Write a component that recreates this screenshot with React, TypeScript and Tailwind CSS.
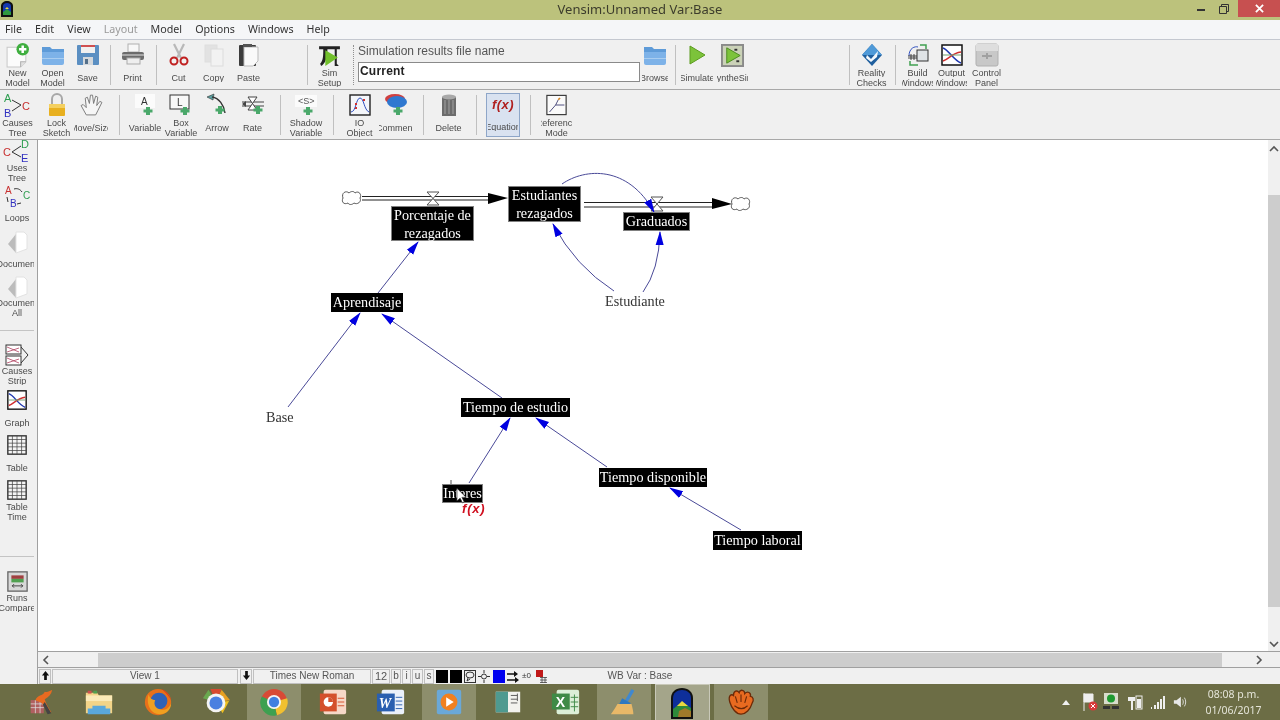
import type { ReactNode } from "react";

const Ico = ({ children, s = "w-6 h-6", v = "0 0 24 24" }: { children: ReactNode; s?: string; v?: string }) => (
  <svg viewBox={v} className={s}>{children}</svg>
);

const Plus = ({ x = 16, y = 18 }: { x?: number; y?: number }) => (
  <path d={`M${x - 2} ${y - 4}h4v2.5h2.5v3H${x + 2}v2.5h-4v-2.5h-2.5v-3H${x - 2}z`} fill="#4aa86a" />
);

const Folder = () => (
  <Ico s="w-[24px] h-[24px]">
    <path d="M1 4h8l2 2h12v4H1z" fill="#5e9bd8" />
    <path d="M1 9h22v11a2 2 0 0 1-2 2H3a2 2 0 0 1-2-2z" fill="#7db2e8" />
    <path d="M1 15h22v1H1z" fill="#a9cdf0" />
  </Ico>
);

const Chart = ({ s = "w-[22px] h-[22px]" }: { s?: string }) => (
  <Ico s={s}>
    <rect x="2" y="2" width="20" height="20" fill="#fff" stroke="#111" strokeWidth="1.5" />
    <path d="M3 5c6 2 10 12 18 15" stroke="#2038b0" strokeWidth="1.5" fill="none" />
    <path d="M3 18c6-2 9-8 18-9" stroke="#d03030" strokeWidth="1.5" fill="none" />
    <path d="M3 12h18" stroke="#70a070" strokeWidth="1" />
  </Ico>
);

const Grid = () => (
  <Ico s="w-[22px] h-[22px]">
    <rect x="2" y="2" width="20" height="20" fill="#f4f4f4" stroke="#333" strokeWidth="1.5" />
    <path d="M2 6h20M2 10h20M2 14h20M2 18h20M7 2v20M12 2v20M17 2v20" stroke="#444" strokeWidth="0.8" />
  </Ico>
);

const Doc = () => (
  <Ico>
    <path d="M3 14l8-10v19z" fill="#bcbcbc" />
    <path d="M11 2h8l3 3v14l-11 4z" fill="#fff" stroke="#e2e2e2" />
  </Ico>
);

const Tree = ({ kind }: { kind: "causes" | "uses" }) =>
  kind === "causes" ? (
    <svg viewBox="0 0 30 26" className="w-[30px] h-[26px]">
      <text x="1" y="10" fontSize="11" fill="#2e9e50" fontFamily="Liberation Sans">A</text>
      <text x="1" y="25" fontSize="11" fill="#3030c0" fontFamily="Liberation Sans">B</text>
      <text x="19" y="18" fontSize="11" fill="#c83030" fontFamily="Liberation Sans">C</text>
      <path d="M9 8l9 5-9 6" stroke="#333" fill="none" />
    </svg>
  ) : (
    <svg viewBox="0 0 30 24" className="w-[30px] h-[24px]">
      <text x="1" y="17" fontSize="11" fill="#c83030" fontFamily="Liberation Sans">C</text>
      <text x="19" y="9" fontSize="11" fill="#2e9e50" fontFamily="Liberation Sans">D</text>
      <text x="19" y="23" fontSize="11" fill="#3030c0" fontFamily="Liberation Sans">E</text>
      <path d="M19 7l-9 6 9 5" stroke="#333" fill="none" />
    </svg>
  );

const icons: Record<string, ReactNode> = {
  new: (
    <Ico s="w-[25px] h-[25px]">
      <path d="M2 4h12l6 4v10l-5 5H2z" fill="#fbfbfb" stroke="#c8c8c8" />
      <path d="M15 23v-5h5" fill="#e0e0e0" stroke="#b0b0b0" />
      <circle cx="17" cy="6" r="6" fill="#3fae3f" />
      <path d="M15.8 2.5h2.4v2.3h2.3v2.4h-2.3v2.3h-2.4V7.2h-2.3V4.8h2.3z" fill="#fff" />
    </Ico>
  ),
  open: <Folder />,
  save: (
    <Ico>
      <rect x="1" y="2" width="22" height="20" rx="1" fill="#5b8fc2" />
      <rect x="5" y="2" width="14" height="8" fill="#f0f0f0" />
      <rect x="5" y="2" width="14" height="2" fill="#d05050" />
      <rect x="7" y="14" width="10" height="8" fill="#d4d8dc" />
      <rect x="9" y="16" width="3" height="5" fill="#55708a" />
    </Ico>
  ),
  print: (
    <Ico>
      <rect x="7" y="1" width="11" height="8" fill="#f8f8f8" stroke="#b0b0b0" />
      <rect x="1" y="9" width="22" height="8" rx="2" fill="#6c6c6c" />
      <rect x="1" y="11" width="22" height="2" fill="#a8a8a8" />
      <rect x="6" y="15" width="13" height="6" fill="#eee" stroke="#aaa" />
    </Ico>
  ),
  cut: (
    <Ico>
      <path d="M7 1l7 14M17 1l-7 14" stroke="#b8b8b8" strokeWidth="2.2" />
      <circle cx="7" cy="18" r="3.5" fill="none" stroke="#c02020" strokeWidth="2" />
      <circle cx="17" cy="18" r="3.5" fill="none" stroke="#c02020" strokeWidth="2" />
    </Ico>
  ),
  copy: (
    <Ico>
      <rect x="3" y="2" width="12" height="17" fill="#e2e2e2" stroke="#dedede" />
      <rect x="9" y="6" width="12" height="17" fill="#f2f2f2" stroke="#dcdcdc" />
    </Ico>
  ),
  paste: (
    <Ico>
      <rect x="2" y="2" width="17" height="21" rx="1" fill="#3c3c3c" />
      <path d="M7 4h14v14l-5 5H7z" fill="#fafafa" stroke="#bbb" />
      <rect x="6" y="1" width="9" height="3" fill="#555" />
    </Ico>
  ),
  sim: (
    <Ico s="w-[25px] h-[25px]">
      <path d="M2 3h20v3h-3v14l2 2h-4V6H10c0 8-2 14-6 16l-1-2c3-3 3-8 3-14H2z" fill="#222" />
      <path d="M8 7l12 7-12 8z" fill="#72c02c" />
    </Ico>
  ),
  browse: <Folder />,
  play: (
    <Ico>
      <path d="M5 3l15 9-15 9z" fill="#7cc33a" stroke="#5c9c20" />
    </Ico>
  ),
  synth: (
    <Ico s="w-[23px] h-[23px]">
      <rect x="0" y="0" width="24" height="24" fill="#8a8a8a" />
      <rect x="2" y="2" width="20" height="20" fill="#cbd2b8" />
      <path d="M6 4l14 8-14 8z" fill="#7cc33a" stroke="#4a8a20" />
      <rect x="14" y="5" width="3" height="2" fill="#333" />
      <rect x="16" y="17" width="3" height="2" fill="#333" />
    </Ico>
  ),
  reality: (
    <Ico>
      <path d="M12 1l10 11-10 11L2 12z" fill="#1f5f9e" />
      <path d="M12 1l10 11H2z" fill="#4f9ad8" />
      <path d="M7 12l4 4 7-8-1 6-6 5-5-4z" fill="#f4f8fc" />
    </Ico>
  ),
  build: (
    <Ico>
      <rect x="11" y="7" width="11" height="11" fill="#dfe3e6" stroke="#333" />
      <path d="M3 13c0-8 6-10 9-9" stroke="#3050c0" fill="none" />
      <path d="M14 2h6v4M4 18v4h8" stroke="#40a050" fill="none" strokeWidth="1.5" />
      <path d="M2 13h9M2 15h9M5 11v6M8 11v6" stroke="#333" strokeWidth="0.9" />
    </Ico>
  ),
  output: <Chart s="w-[24px] h-[24px]" />,
  control: (
    <Ico>
      <rect x="1" y="1" width="22" height="22" rx="2" fill="#c8c8c8" stroke="#b0b0b0" />
      <rect x="1" y="1" width="22" height="7" fill="#dedede" />
      <path d="M7 13h10M12 10v6" stroke="#a0a0a0" strokeWidth="2" />
    </Ico>
  ),
  causes: <Tree kind="causes" />,
  lock: (
    <Ico>
      <path d="M7 11V6a5 5 0 0 1 10 0v5" fill="none" stroke="#a8a8a8" strokeWidth="2" />
      <rect x="4" y="11" width="16" height="12" rx="1" fill="#e8b020" />
      <rect x="4" y="11" width="16" height="4" fill="#f4d060" />
    </Ico>
  ),
  hand: (
    <Ico s="w-[25px] h-[25px]">
      <path d="M7 22L2 13l2-1 3 3-1-9 2-1 2 6 1-8h2l1 8 2-7 2 1-1 8 3-4 2 1-4 8-2 4z" fill="#f6f6f6" stroke="#777" strokeWidth="0.9" />
    </Ico>
  ),
  variable: (
    <Ico>
      <rect x="2" y="1" width="20" height="14" fill="#fbfbfb" />
      <text x="8" y="12" fontSize="10" fill="#333" fontFamily="Liberation Sans">A</text>
      <Plus x={15} y={18} />
    </Ico>
  ),
  box: (
    <Ico>
      <rect x="1" y="2" width="19" height="14" fill="#f8f8f8" stroke="#333" />
      <text x="8" y="13" fontSize="10" fill="#333" fontFamily="Liberation Sans">L</text>
      <Plus x={16} y={18} />
    </Ico>
  ),
  arrow: (
    <Ico>
      <path d="M2 4l7-3-1 6z" fill="#5aa0a0" stroke="#333" strokeWidth="0.6" />
      <path d="M7 4c7 1 12 8 13 16" stroke="#333" fill="none" strokeWidth="1.4" />
      <Plus x={15} y={17} />
    </Ico>
  ),
  rate: (
    <Ico>
      <path d="M1 9h22M1 13h22" stroke="#444" />
      <path d="M7 4h9L7 17h9z" fill="#fff" stroke="#444" />
      <path d="M1 11l4-3v6z" fill="#444" />
      <Plus x={17} y={17} />
    </Ico>
  ),
  shadow: (
    <Ico>
      <rect x="1" y="2" width="22" height="12" fill="#fbfbfb" />
      <text x="4" y="11" fontSize="9" fill="#555" fontFamily="Liberation Sans">{"<S>"}</text>
      <Plus x={14} y={18} />
    </Ico>
  ),
  io: (
    <Ico>
      <rect x="2" y="2" width="20" height="20" fill="#f4f6fa" stroke="#222" strokeWidth="1.4" />
      <path d="M3 19c5 0 5-14 9-14s4 12 9 14" stroke="#3050c0" fill="none" />
      <path d="M7 11h2M15 7h2M7 15h2" stroke="#d03030" strokeWidth="2" />
    </Ico>
  ),
  comment: (
    <Ico>
      <ellipse cx="11" cy="6" rx="10" ry="5" fill="#d04040" />
      <ellipse cx="13" cy="9" rx="10" ry="6" fill="#2f78d0" />
      <Plus x={14} y={18} />
    </Ico>
  ),
  del: (
    <Ico>
      <rect x="5" y="4" width="14" height="19" fill="#6c6c6c" />
      <ellipse cx="12" cy="4" rx="7" ry="2.5" fill="#a8a8a8" />
      <path d="M8 7v14M12 7v14M16 7v14" stroke="#9a9a9a" strokeWidth="1.2" />
    </Ico>
  ),
  fx: <span className="font-['Liberation_Sans',sans-serif] italic font-bold text-[13px] tracking-[0.5px] text-[#b02020]">f(x)</span>,
  ref: (
    <Ico s="w-[21px] h-[22px]">
      <rect x="1" y="1" width="22" height="22" fill="#fafafa" stroke="#333" strokeWidth="1.3" />
      <path d="M4 20l7-8 3-6M11 12h10" stroke="#3a3a70" fill="none" />
      <path d="M14 6l2-2" stroke="#d08020" strokeWidth="2" />
    </Ico>
  ),
};

type Btn = { icon: string; label: string[]; w: string; ml?: string; active?: boolean };
type Item = Btn | { sep: string } | { dots: string } | { results: true };

const row1: Item[] = [
  { icon: "new", label: ["New", "Model"], w: "w-[35px]" },
  { icon: "open", label: ["Open", "Model"], w: "w-[35px]" },
  { icon: "save", label: ["Save"], w: "w-[35px]" },
  { sep: "ml-[5px]" },
  { icon: "print", label: ["Print"], w: "w-[35px]", ml: "ml-[4px]" },
  { sep: "ml-[6px]" },
  { icon: "cut", label: ["Cut"], w: "w-[35px]", ml: "ml-[4px]" },
  { icon: "copy", label: ["Copy"], w: "w-[35px]" },
  { icon: "paste", label: ["Paste"], w: "w-[35px]" },
  { sep: "ml-[41px]" },
  { icon: "sim", label: ["Sim", "Setup"], w: "w-[35px]", ml: "ml-[4px]" },
  { dots: "ml-[6px]" },
  { results: true },
  { icon: "browse", label: ["Browse"], w: "w-[26px]", ml: "ml-[2px]" },
  { sep: "ml-[7px]" },
  { icon: "play", label: ["Simulate"], w: "w-[32px]", ml: "ml-[5px]" },
  { icon: "synth", label: ["SyntheSim"], w: "w-[31px]", ml: "ml-[4px]" },
  { sep: "ml-[101px]" },
  { icon: "reality", label: ["Reality", "Checks"], w: "w-[35px]", ml: "ml-[4px]" },
  { sep: "ml-[6px]" },
  { icon: "build", label: ["Build", "Windows"], w: "w-[31px]", ml: "ml-[6px]" },
  { icon: "output", label: ["Output", "Windows"], w: "w-[31px]", ml: "ml-[3px]" },
  { icon: "control", label: ["Control", "Panel"], w: "w-[35px]", ml: "ml-[2px]" },
];

const row2: Item[] = [
  { icon: "causes", label: ["Causes", "Tree"], w: "w-[35px]" },
  { icon: "lock", label: ["Lock", "Sketch"], w: "w-[35px]", ml: "ml-[4px]" },
  { icon: "hand", label: ["Move/Size"], w: "w-[34px]" },
  { sep: "ml-[11px]" },
  { icon: "variable", label: ["Variable"], w: "w-[36px]", ml: "ml-[7px]" },
  { icon: "box", label: ["Box", "Variable"], w: "w-[36px]" },
  { icon: "arrow", label: ["Arrow"], w: "w-[36px]" },
  { icon: "rate", label: ["Rate"], w: "w-[35px]" },
  { sep: "ml-[10px]" },
  { icon: "shadow", label: ["Shadow", "Variable"], w: "w-[36px]", ml: "ml-[7px]" },
  { sep: "ml-[9px]" },
  { icon: "io", label: ["IO", "Object"], w: "w-[35px]", ml: "ml-[8px]" },
  { icon: "comment", label: ["Comment"], w: "w-[33px]", ml: "ml-[2px]" },
  { sep: "ml-[11px]" },
  { icon: "del", label: ["Delete"], w: "w-[35px]", ml: "ml-[7px]" },
  { sep: "ml-[10px]" },
  { icon: "fx", label: ["Equation"], w: "w-[34px]", ml: "ml-[9px]", active: true },
  { sep: "ml-[10px]" },
  { icon: "ref", label: ["Reference", "Mode"], w: "w-[31px]", ml: "ml-[10px]" },
];

const Clip = ({ t }: { t: string }) => (
  <div className="w-full h-[10px] flex justify-center overflow-hidden">
    <span className="whitespace-nowrap shrink-0">{t}</span>
  </div>
);

const ToolBtn = ({ b }: { b: Btn }) => (
  <div
    className={`${b.w} ${b.ml ?? ""} shrink-0 h-[44px] flex flex-col items-center ${
      b.active ? "bg-[#d9e2f0] border border-[#8ea6c8]" : ""
    }`}
  >
    <div className="h-[24px] w-full flex items-center justify-center">{icons[b.icon]}</div>
    <div className={`h-[20px] w-full flex flex-col justify-center ${b.active ? "px-[1px]" : ""}`}>
      {b.label.map((t) => (
        <Clip key={t} t={t} />
      ))}
    </div>
  </div>
);

const ToolRow = ({ items, cls }: { items: Item[]; cls: string }) => (
  <div className={`${cls} flex items-center bg-[#f0f0f0] border-b border-[#a8a8a8] text-[9px] text-[#4a4a4a] font-['Liberation_Sans',sans-serif]`}>
    {items.map((it, i) => {
      if ("sep" in it) return <div key={i} className={`${it.sep} w-px h-[40px] bg-[#c0c0c0] shrink-0`} />;
      if ("dots" in it) return <div key={i} className={`${it.dots} h-[40px] border-l border-dotted border-[#909090] shrink-0`} />;
      if ("results" in it)
        return (
          <div key={i} className="ml-[4px] w-[282px] shrink-0 h-[44px] flex flex-col">
            <div className="text-[12px] leading-[15px] text-[#555] pt-[1px] h-[19px]">Simulation results file name</div>
            <div className="h-[20px] bg-white border border-[#8a8a8a] px-[1px] text-[12px] leading-[17px] font-bold tracking-[0.2px] text-[#222]">
              Current
            </div>
          </div>
        );
      return <ToolBtn key={i} b={it} />;
    })}
  </div>
);

const Side = ({ icon, label, mt, labelMt }: { icon: ReactNode; label: string[]; mt: string; labelMt: string }) => (
  <div className={`${mt} flex flex-col items-center`}>
    <div className="h-[24px] w-full flex items-center justify-center">{icon}</div>
    <div className={`${labelMt} w-full`}>
      {label.map((t) => (
        <Clip key={t} t={t} />
      ))}
    </div>
  </div>
);

const Sidebar = () => (
  <div className="w-[37px] shrink-0 bg-[#f0f0f0] pr-[3px] text-[9px] text-[#4a4a4a] font-['Liberation_Sans',sans-serif] flex flex-col">
    <Side icon={<Tree kind="uses" />} label={["Uses", "Tree"]} mt="-mt-px" labelMt="-mt-px" />
    <Side
      mt="mt-[2px]"
      labelMt="mt-[4px]"
      label={["Loops"]}
      icon={
        <svg viewBox="0 0 30 24" className="w-[30px] h-[24px]">
          <text x="3" y="10" fontSize="10" fill="#c83030" fontFamily="Liberation Sans">A</text>
          <text x="21" y="15" fontSize="10" fill="#2e9e50" fontFamily="Liberation Sans">C</text>
          <text x="8" y="23" fontSize="10" fill="#3030c0" fontFamily="Liberation Sans">B</text>
          <path d="M12 5c3-1 6 0 8 3M19 19l-4 1M6 18l-1-5" stroke="#333" fill="none" />
        </svg>
      }
    />
    <Side icon={<Doc />} label={["Document"]} mt="mt-[8px]" labelMt="mt-[4px]" />
    <Side icon={<Doc />} label={["Document", "All"]} mt="mt-[7px]" labelMt="-mt-[2px]" />
    <div className="mt-[13px] h-px bg-[#c4c4c4]" />
    <Side
      mt="mt-[12px]"
      labelMt="-mt-[2px]"
      label={["Causes", "Strip"]}
      icon={
        <svg viewBox="0 0 24 24" className="w-[24px] h-[24px]">
          <rect x="1" y="2" width="15" height="9" fill="#fff" stroke="#333" />
          <rect x="1" y="13" width="15" height="9" fill="#fff" stroke="#333" />
          <path d="M2 4l12 5M2 9l12-4M2 15l12 5M2 20l12-4" stroke="#b04060" strokeWidth="0.8" />
          <path d="M16 4l7 8-7 8" fill="none" stroke="#333" />
        </svg>
      }
    />
    <Side icon={<Chart />} label={["Graph"]} mt="mt-[3px]" labelMt="mt-[5px]" />
    <Side icon={<Grid />} label={["Table"]} mt="mt-[6px]" labelMt="mt-[5px]" />
    <Side icon={<Grid />} label={["Table", "Time"]} mt="mt-[6px]" labelMt="-mt-px" />
    <div className="mt-[35px] h-px bg-[#c4c4c4]" />
    <Side
      mt="mt-[12px]"
      labelMt="-mt-px"
      label={["Runs", "Compare"]}
      icon={
        <svg viewBox="0 0 24 24" className="w-[21px] h-[21px]">
          <rect x="1" y="1" width="22" height="22" fill="#d8d8d8" stroke="#666" strokeWidth="1.5" />
          <rect x="5" y="5" width="14" height="4" fill="#a04040" />
          <rect x="5" y="9" width="14" height="4" fill="#50a050" />
          <path d="M6 17h12M8 15l-2 2 2 2M16 15l2 2-2 2" stroke="#333" fill="none" />
        </svg>
      }
    />
  </div>
);

const Node = ({ pos, lines, plain, edge }: { pos: string; lines: string[]; plain?: boolean; edge?: boolean }) => (
  <div
    className={`absolute ${pos} flex flex-col items-center justify-center text-[14.2px] leading-[18px] whitespace-nowrap font-['Liberation_Serif',serif] ${
      plain ? "text-[#333]" : `bg-black text-white border ${edge ? "border-[#808080]" : "border-black"}`
    } ${!plain && lines.length === 1 ? "pb-[2px]" : ""}`}
  >
    {lines.map((l) => (
      <span key={l}>{l}</span>
    ))}
  </div>
);

const cloud = "M-8 0C-10 -5 -5 -8 -2 -5C0 -7 3 -7 4 -5C8 -8 11 -3 9 0C11 4 6 7 3 5C1 7 -2 7 -3 5C-7 7 -10 4 -8 0Z";

const Diagram = () => (
  <div className="relative flex-1 bg-white overflow-hidden">
    <svg viewBox="38 140 1230 512" className="absolute inset-0 w-[1230px] h-[512px]">
      <defs>
        <marker id="ah" markerUnits="userSpaceOnUse" markerWidth="14" markerHeight="10" refX="13" refY="5" orient="auto">
          <path d="M0 1L14 5L0 9z" fill="#0000e0" />
        </marker>
      </defs>
      <g stroke="#222" strokeWidth="1" fill="none">
        <path d="M362 196.5H490M362 200H490" />
        <path d="M584 202.5H714M584 207H714" />
      </g>
      <path d="M488 193L508 198L488 204z" fill="#000" />
      <path d="M712 198L732 204L712 209z" fill="#000" />
      <path d={cloud} transform="translate(351 198)" fill="#fff" stroke="#555" />
      <path d={cloud} transform="translate(740 204)" fill="#fff" stroke="#555" />
      <path d="M427 192H439L427 205H439z" fill="#fff" stroke="#555" />
      <path d="M651 197H663L651 211H663z" fill="#fff" stroke="#555" />
      <g stroke="#4a4a98" strokeWidth="1" fill="none">
        <path d="M378 293L418 242" markerEnd="url(#ah)" />
        <path d="M288 407L360 313" markerEnd="url(#ah)" />
        <path d="M502 398L382 314" markerEnd="url(#ah)" />
        <path d="M469 483L510 418" markerEnd="url(#ah)" />
        <path d="M607 467L536 418" markerEnd="url(#ah)" />
        <path d="M741 530L670 488" markerEnd="url(#ah)" />
        <path d="M614 291Q575 266 553 224" markerEnd="url(#ah)" />
        <path d="M643 292Q659 270 660 232" markerEnd="url(#ah)" />
        <path d="M562 184C585 168 628 165 654 212" markerEnd="url(#ah)" />
      </g>
      <path d="M451 480v5" stroke="#555" />
    </svg>
    <Node pos="left-[353px] top-[66px] w-[83px] h-[35px]" lines={["Porcentaje de", "rezagados"]} edge />
    <Node pos="left-[470px] top-[46px] w-[73px] h-[36px]" lines={["Estudiantes", "rezagados"]} edge />
    <Node pos="left-[585px] top-[72px] w-[67px] h-[19px]" lines={["Graduados"]} edge />
    <Node pos="left-[293px] top-[153px] w-[72px] h-[19px]" lines={["Aprendisaje"]} />
    <Node pos="left-[423px] top-[258px] w-[109px] h-[19px]" lines={["Tiempo de estudio"]} />
    <Node pos="left-[561px] top-[328px] w-[108px] h-[19px]" lines={["Tiempo disponible"]} />
    <Node pos="left-[404px] top-[344px] w-[41px] h-[19px]" lines={["Interes"]} edge />
    <Node pos="left-[675px] top-[391px] w-[89px] h-[19px]" lines={["Tiempo laboral"]} />
    <Node pos="left-[567px] top-[152px]" lines={["Estudiante"]} plain />
    <Node pos="left-[228px] top-[268px]" lines={["Base"]} plain />
    <span className="absolute left-[424px] top-[360px] text-[13px] leading-[18px] tracking-[0.8px] italic font-bold text-[#d01020] font-['Liberation_Sans',sans-serif]">
      f(x)
    </span>
    {/* mouse pointer */}
    <svg viewBox="0 0 12 18" className="absolute left-[418px] top-[347px] w-[11px] h-[17px]">
      <path d="M1 1v14l3.5-3 2.5 5 2-1-2.5-5H11z" fill="#fff" stroke="#222" strokeWidth="0.8" />
    </svg>
  </div>
);

const Chev = ({ d }: { d: string }) => (
  <svg viewBox="0 0 10 10" className="w-[10px] h-[10px]">
    <path d={d} stroke="#555" strokeWidth="1.6" fill="none" />
  </svg>
);

const StatBox = ({ ml, w, children, cls = "" }: { ml: string; w: string; children?: ReactNode; cls?: string }) => (
  <div className={`${ml} ${w} ${cls} h-[15px] shrink-0 flex items-center justify-center border border-[#c0c0c0]`}>{children}</div>
);

const StepArrow = ({ d }: { d: string }) => (
  <svg viewBox="0 0 10 11" className="w-[9px] h-[10px]">
    <path d={d} fill="#111" />
  </svg>
);

const StatusBar = () => (
  <div className="h-[16px] bg-[#f0f0f0] flex items-center text-[10px] text-[#555] font-['Liberation_Sans',sans-serif] leading-none">
    <StatBox ml="ml-px" w="w-[12px]"><StepArrow d="M5 0l4 5H6.5v5h-3V5H1z" /></StatBox>
    <StatBox ml="ml-px" w="w-[186px]">View 1</StatBox>
    <StatBox ml="ml-[2px]" w="w-[12px]"><StepArrow d="M5 10L1 5h2.5V0h3v5H9z" /></StatBox>
    <StatBox ml="ml-px" w="w-[118px]">Times New Roman</StatBox>
    <StatBox ml="ml-px" w="w-[18px]" cls="text-[11px]">12</StatBox>
    <StatBox ml="ml-px" w="w-[10px]">b</StatBox>
    <StatBox ml="ml-px" w="w-[9px]">i</StatBox>
    <StatBox ml="ml-px" w="w-[11px]">u</StatBox>
    <StatBox ml="ml-px" w="w-[10px]">s</StatBox>
    <div className="ml-[2px] w-[12px] h-[13px] bg-black shrink-0" />
    <div className="ml-[2px] w-[12px] h-[13px] bg-black shrink-0" />
    <svg viewBox="0 0 12 13" className="ml-[2px] w-[12px] h-[13px] shrink-0">
      <rect x="0.5" y="0.5" width="11" height="12" fill="#eee" stroke="#333" />
      <ellipse cx="6" cy="5" rx="4" ry="3" fill="none" stroke="#333" />
      <path d="M4 8l-1 3 3-2" fill="none" stroke="#333" />
    </svg>
    <svg viewBox="0 0 12 13" className="ml-[2px] w-[12px] h-[13px] shrink-0">
      <circle cx="6" cy="6.5" r="2.5" fill="none" stroke="#333" />
      <path d="M6 0v3M6 10v3M0 6.5h3M9 6.5h3" stroke="#333" />
    </svg>
    <div className="ml-[3px] w-[12px] h-[13px] bg-[#0000f0] shrink-0" />
    <svg viewBox="0 0 12 13" className="ml-[2px] w-[12px] h-[13px] shrink-0">
      <path d="M0 4h8M0 10h10" stroke="#111" strokeWidth="1.5" />
      <path d="M7 1l4 3-4 3zM8 7l4 3-4 3z" fill="#111" />
    </svg>
    <span className="ml-[3px] w-[12px] shrink-0 text-[8px] text-[#333]">±0</span>
    <svg viewBox="0 0 12 13" className="ml-[2px] w-[12px] h-[13px] shrink-0">
      <rect x="0" y="0" width="7" height="7" fill="#c01818" />
      <path d="M4 7.5h7M4 10h7M4 12.5h7M6 7v6M9 7v6" stroke="#444" strokeWidth="0.8" />
    </svg>
    <span className="ml-[58px] w-[68px] text-center whitespace-nowrap shrink-0">WB Var : Base</span>
  </div>
);

const tb = "w-[30px] h-[30px]";
const taskIcons: { h?: string; el: ReactNode }[] = [
  {
    el: (
      <svg viewBox="0 0 32 32" className={tb}>
        <rect x="5" y="14" width="14" height="14" fill="#b06060" />
        <path d="M5 18h14M5 22h14M10 14v14M15 14v14" stroke="#ddd" strokeWidth="0.8" />
        <path d="M10 14c2-6 8-4 10-9 3 1 6-1 8-2-1 5-4 8-8 10 1 4 4 9 7 14l-4 1-6-11z" fill="#e86a20" />
        <path d="M20 16l7 12-4 1-5-10z" fill="#444" />
      </svg>
    ),
  },
  {
    el: (
      <svg viewBox="0 0 32 32" className={tb}>
        <path d="M2 6h12l2 3h14v19H2z" fill="#f3d488" />
        <rect x="2" y="9" width="28" height="6" fill="#fbeab8" />
        <rect x="4" y="4" width="4" height="3" fill="#d05050" />
        <rect x="10" y="4" width="4" height="3" fill="#50a050" />
        <path d="M9 20h14v3h5v6H4v-6h5z" fill="#5aa8dc" />
      </svg>
    ),
  },
  {
    el: (
      <svg viewBox="0 0 32 32" className={tb}>
        <circle cx="16" cy="16" r="14" fill="#e8701a" />
        <circle cx="17" cy="15" r="9" fill="#2f62b8" />
        <path d="M6 8c-3 10 2 21 12 21 8 0 12-6 12-12-2 6-7 8-11 7-6-1-8-6-6-10-3 0-6-2-7-6z" fill="#f0a020" />
        <path d="M20 2c5 2 9 7 10 12-3-6-6-8-10-12z" fill="#d83a20" />
      </svg>
    ),
  },
  {
    el: (
      <svg viewBox="0 0 32 32" className={tb}>
        <path d="M16 16L8 3 2 12z" fill="#6aa84f" />
        <path d="M16 16L10 2h12z" fill="#d84a30" />
        <path d="M16 16L22 3l9 11z" fill="#e8a020" />
        <path d="M16 16l14-1-7 13z" fill="#f0c020" />
        <circle cx="16" cy="17" r="10" fill="#f4f4f4" />
        <circle cx="16" cy="17" r="7" fill="#4a80e0" />
      </svg>
    ),
  },
  {
    h: "bg-[#8d8e6c]",
    el: (
      <svg viewBox="0 0 32 32" className={tb}>
        <circle cx="16" cy="16" r="14" fill="#d84a36" />
        <path d="M16 16L30 12a14 14 0 0 1-11 18z" fill="#f0c030" />
        <path d="M16 16l3 14A14 14 0 0 1 3 10z" fill="#3da050" />
        <circle cx="16" cy="16" r="7.5" fill="#f4f4f4" />
        <circle cx="16" cy="16" r="5.5" fill="#3f7ee0" />
      </svg>
    ),
  },
  {
    el: (
      <svg viewBox="0 0 32 32" className={tb}>
        <rect x="6" y="3" width="24" height="26" rx="2" fill="#f6d8c8" />
        <rect x="2" y="7" width="18" height="19" fill="#d4502c" />
        <circle cx="11" cy="16" r="5" fill="#fff" />
        <path d="M11 16V11a5 5 0 0 1 5 5z" fill="#d4502c" />
        <path d="M21 12h7M21 16h7M21 20h7" stroke="#d4502c" />
      </svg>
    ),
  },
  {
    el: (
      <svg viewBox="0 0 32 32" className={tb}>
        <rect x="6" y="3" width="24" height="26" rx="2" fill="#eaf0fa" />
        <rect x="1" y="7" width="19" height="19" fill="#2a5fb0" />
        <text x="3" y="22" fontSize="15" fontWeight="bold" fontStyle="italic" fill="#fff" fontFamily="Liberation Serif">W</text>
        <path d="M21 11h7M21 15h7M21 19h7M21 23h7" stroke="#2a5fb0" />
      </svg>
    ),
  },
  {
    h: "bg-[#8d8e6c]",
    el: (
      <svg viewBox="0 0 32 32" className={tb}>
        <rect x="3" y="3" width="26" height="26" rx="2" fill="#6aa8d8" />
        <circle cx="16" cy="16" r="9" fill="#f08020" />
        <path d="M13 11l8 5-8 5z" fill="#fff" />
      </svg>
    ),
  },
  {
    el: (
      <svg viewBox="0 0 32 32" className={tb}>
        <rect x="3" y="5" width="26" height="22" fill="#f2f2ee" />
        <rect x="3" y="5" width="13" height="22" fill="#4f9a90" />
        <path d="M19 9h7M19 13h7M19 17h7M26 7v8" stroke="#555" />
      </svg>
    ),
  },
  {
    el: (
      <svg viewBox="0 0 32 32" className={tb}>
        <rect x="6" y="3" width="24" height="26" rx="2" fill="#dcefd8" />
        <rect x="1" y="7" width="19" height="17" fill="#3f8a46" />
        <text x="5" y="21" fontSize="15" fontWeight="bold" fill="#fff" fontFamily="Liberation Sans">X</text>
        <path d="M21 11h8M21 16h8M21 21h8M25 8v18" stroke="#3f8a46" />
      </svg>
    ),
  },
  {
    h: "bg-[#8d8e6c]",
    el: (
      <svg viewBox="0 0 32 32" className={tb}>
        <path d="M24 2l3 2-7 12-3-2z" fill="#3f88d0" />
        <path d="M14 12l9 5-1 3H10z" fill="#2f78c0" />
        <path d="M9 18h15c1 4 2 8 2 11H2c2-3 5-7 7-11z" fill="#e8b868" />
      </svg>
    ),
  },
  {
    h: "bg-[#a4a58a] border-x border-t border-[#c8c8b8]",
    el: (
      <svg viewBox="0 0 24 32" className="w-[24px] h-[32px]">
        <path d="M1 32V11C1 5 6 1 12 1s11 4 11 10v21z" fill="#111" />
        <path d="M3 30V11c0-5 4-8 9-8s9 3 9 8v19z" fill="#0e2f9a" />
        <path d="M3 22l9-7 9 6v9H3z" fill="#2e8a3a" />
        <path d="M7 19l5-5 6 5z" fill="#e8d840" />
        <path d="M9 24l6-3 6 3v6H8z" fill="#a07a2a" />
      </svg>
    ),
  },
  {
    h: "bg-[#8d8e6c]",
    el: (
      <svg viewBox="0 0 32 32" className={tb}>
        <path d="M4 16C2 9 6 7 8 9c0-5 4-6 6-3 1-4 6-3 6 1 3-3 7-1 6 3 3 0 4 4 2 7-2 7-7 12-12 12S6 23 4 16z" fill="#e86a20" stroke="#6c2a08" strokeWidth="1.4" />
        <path d="M10 10l2 7M16 8v8M22 10l-2 7M9 20c5 4 10 4 14 0" stroke="#6c2a08" fill="none" strokeWidth="1.2" />
      </svg>
    ),
  },
];

const Taskbar = () => (
  <div className="h-[36px] bg-[#6c6d45] flex items-center pl-[12px]">
    {taskIcons.map((t, i) => (
      <div key={i} className="w-[58.3px] h-full shrink-0 px-[2px]">
        <div className={`w-full h-full flex items-center justify-center ${t.h ?? ""}`}>{t.el}</div>
      </div>
    ))}
    <div className="ml-auto flex items-center h-full text-[#e4e4d8]">
      <svg viewBox="0 0 8 5" className="w-[8px] h-[5px] mr-[12px]"><path d="M0 5l4-5 4 5z" fill="#f0f0f0" /></svg>
      <svg viewBox="0 0 16 18" className="w-[16px] h-[18px] mr-[5px]">
        <path d="M2 0v18M2 1h9v8H2z" fill="#eee" stroke="#eee" />
        <circle cx="11" cy="13" r="4.5" fill="#d83a3a" />
        <path d="M9 11l4 4M13 11l-4 4" stroke="#fff" />
      </svg>
      <svg viewBox="0 0 16 18" className="w-[16px] h-[18px] mr-[8px]">
        <rect x="1" y="0" width="14" height="11" fill="#d8dccc" />
        <circle cx="8" cy="5.5" r="4" fill="#1f9a30" />
        <rect x="0" y="13" width="7" height="3" fill="#333" />
        <rect x="9" y="13" width="7" height="3" fill="#333" />
      </svg>
      <svg viewBox="0 0 16 16" className="w-[16px] h-[16px] mr-[7px]">
        <path d="M3 0v3M6 0v3M1 3h7v4H6v9H4V7H1z" fill="#eee" />
        <rect x="9" y="2" width="6" height="13" fill="none" stroke="#eee" />
        <rect x="10" y="5" width="4" height="9" fill="#eee" />
      </svg>
      <svg viewBox="0 0 16 14" className="w-[16px] h-[14px] mr-[7px]">
        <path d="M1 12h1v2H1zM4 10h2v4H4zM7 7h2v7H7zM10 4h2v10h-2zM13 1h2v13h-2z" fill="#eee" />
      </svg>
      <svg viewBox="0 0 16 14" className="w-[14px] h-[14px]">
        <path d="M1 5h3l5-4v12l-5-4H1z" fill="#e8e8e8" />
        <path d="M11 4c1 2 1 4 0 6M13 2c2 3 2 7 0 10" stroke="#e8e8e8" fill="none" />
      </svg>
      <div className="w-[93px] text-center text-[10.5px] leading-[16px] font-['Noto_Sans',sans-serif]">
        <div>08:08 p.m.</div>
        <div>01/06/2017</div>
      </div>
    </div>
  </div>
);

export default function App() {
  return (
    <div className="w-[1280px] h-[720px] flex flex-col overflow-hidden bg-[#f0f0f0] blur-[0.4px]">
      {/* title bar */}
      <div className="relative h-[20px] bg-[#bcc27c] flex items-center justify-center text-[13px] text-[#3c3c2c] font-['Noto_Sans',sans-serif]">
        <svg viewBox="0 0 12 16" className="absolute left-[1px] top-[1px] w-[12px] h-[16px]">
          <path d="M0 16V5c0-3 3-5 6-5s6 2 6 5v11z" fill="#111" />
          <path d="M2 14V5c0-2 2-3 4-3s4 1 4 3v9z" fill="#1438b0" />
          <path d="M2 11l4-3 4 3v3H2z" fill="#2e9a40" />
          <path d="M4 8l2-2 2 2z" fill="#e8d840" />
        </svg>
        Vensim:Unnamed Var:Base
        <div className="absolute right-0 top-0 h-[17px] flex items-stretch">
          <div className="w-[19px] flex items-center justify-center">
            <div className="w-[8px] h-[2px] bg-[#333] mt-[3px]" />
          </div>
          <div className="w-[28px] flex items-center justify-center">
            <svg viewBox="0 0 10 10" className="w-[10px] h-[10px]">
              <path d="M.5 2.5h7v7h-7zM2.5 2.5v-2h7v7h-2" fill="none" stroke="#333" />
            </svg>
          </div>
          <div className="w-[42px] bg-[#c75050] flex items-center justify-center">
            <svg viewBox="0 0 10 10" className="w-[9px] h-[9px]">
              <path d="M1 1l8 8M9 1l-8 8" stroke="#fff" strokeWidth="2" />
            </svg>
          </div>
        </div>
      </div>
      {/* menu */}
      <div className="h-[20px] bg-[#f5f6f8] border-b border-[#c4c8d0] flex items-center pl-[5px] gap-[13px] text-[10.7px] text-[#333] font-['Noto_Sans',sans-serif]">
        <span>File</span>
        <span>Edit</span>
        <span>View</span>
        <span className="text-[#9a9a9a]">Layout</span>
        <span>Model</span>
        <span>Options</span>
        <span>Windows</span>
        <span>Help</span>
      </div>
      <ToolRow items={row1} cls="h-[50px] pt-px" />
      <ToolRow items={row2} cls="h-[50px]" />
      <div className="flex-1 flex min-h-0">
        <Sidebar />
        <div className="flex-1 flex flex-col border-l border-[#a0a0a0] min-w-0">
          <div className="flex-1 flex min-h-0 border-b border-[#a0a0a0]">
            <Diagram />
            <div className="w-[12px] shrink-0 bg-[#f0f0f0] flex flex-col items-center">
              <div className="h-[55px] pt-[4px]"><Chev d="M1 7l4-4 4 4" /></div>
              <div className="w-full h-[412px] bg-[#cdcdcd]" />
              <div className="pt-[32px]"><Chev d="M1 3l4 4 4-4" /></div>
            </div>
          </div>
          <div className="h-[16px] shrink-0 bg-[#f0f0f0] flex items-center border-b border-[#a0a0a0]">
            <div className="w-[60px] pl-[3px]"><Chev d="M7 1L3 5l4 4" /></div>
            <div className="w-[1124px] h-[14px] bg-[#cdcdcd]" />
            <div className="pl-[32px]"><Chev d="M3 1l4 4-4 4" /></div>
          </div>
          <StatusBar />
        </div>
      </div>
      <Taskbar />
    </div>
  );
}
